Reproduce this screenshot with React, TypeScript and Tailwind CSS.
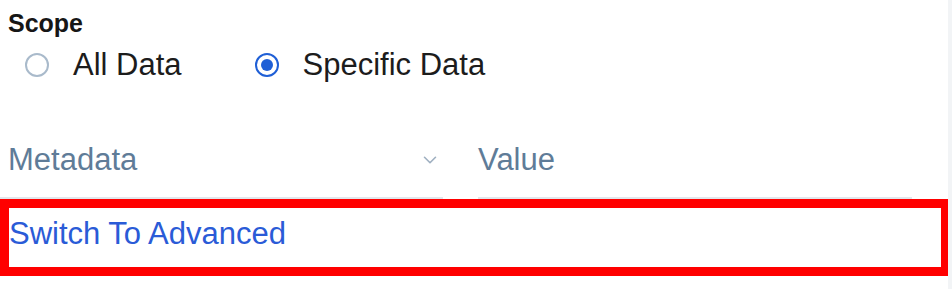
import React from 'react';
import { ChevronDown } from 'lucide-react';

const font = { fontFamily: '"Liberation Sans", Arial, sans-serif' };

function Radio({ label, checked }: { label: string; checked?: boolean }) {
  return (
    <div className="flex items-center gap-[24px]">
      <span
        className={`flex h-[24px] w-[24px] items-center justify-center rounded-full border-2 ${
          checked ? 'border-[#1f5fd6]' : 'border-[#a9bacb]'
        }`}
      >
        {checked && <span className="h-[12px] w-[12px] rounded-full bg-[#1f5fd6]" />}
      </span>
      <span className="text-[31px] leading-[36px] text-[#1c1c1c]">{label}</span>
    </div>
  );
}

export default function App() {
  return (
    <div className="flex h-[289px] w-[952px] overflow-hidden bg-white" style={font}>
      <div className="w-[948px] shrink-0">
        {/* Scope */}
        <div className="pl-[8px] pt-[8px] text-[25px] font-bold leading-[30px] text-[#161616]">Scope</div>

        <div className="mt-[9px] flex items-center pl-[25px]">
          <Radio label="All Data" />
          <div className="ml-[73px]">
            <Radio label="Specific Data" checked />
          </div>
        </div>

        {/* Metadata / Value */}
        <div className="mt-[59px] flex gap-[35px]">
          <div className="flex w-[443px] items-center justify-between border-b-2 border-[#e1e6ec] pb-[19px] pl-[8px] pr-[2px]">
            <span className="text-[31px] leading-[36px] text-[#5f7c98]">Metadata</span>
            <ChevronDown size={22} strokeWidth={1.75} className="text-[#9fb0c1]" />
          </div>
          <div className="w-[434px] border-b-2 border-[#e1e6ec] pb-[19px]">
            <span className="text-[31px] leading-[36px] text-[#5f7c98]">Value</span>
          </div>
        </div>

        {/* Advanced link */}
        <div className="h-[77px] w-[950px] border-[9px] border-[#ff0000] pt-[8px]">
          <span className="text-[31px] leading-[36px] text-[#2a5bd7]">Switch To Advanced</span>
        </div>
      </div>
      <div className="w-[4px] shrink-0 bg-[#f2f4f6]" />
    </div>
  );
}
